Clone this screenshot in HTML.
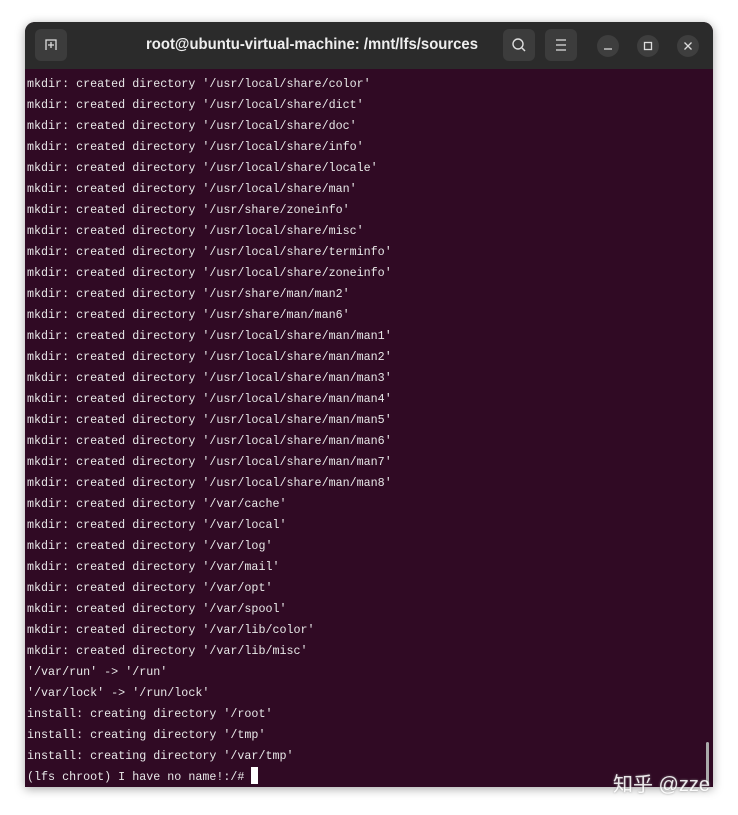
<!DOCTYPE html>
<html><head><meta charset="utf-8"><style>
body{margin:0;width:738px;height:815px;background:#fff;position:relative;overflow:hidden;font-family:"Liberation Sans",sans-serif}
.win{position:absolute;left:25px;top:22px;width:688px;height:765px;border-radius:10px 10px 0 0;overflow:hidden;box-shadow:0 2px 10px rgba(0,0,0,.35);background:#300a24}
.hdr{position:absolute;left:0;top:0;width:688px;height:47px;background:#2b2b2b}
.title{position:absolute;left:287px;top:14px;color:#eee;font-weight:bold;font-size:15.5px;white-space:nowrap;transform:translateX(-50%) scaleX(0.96)}
.btn{position:absolute;top:7px;width:32px;height:32px;border-radius:6px;background:#3c3c3c}
.circ{position:absolute;top:13px;width:22px;height:22px;border-radius:50%;background:#3e3e3e}
.term{position:absolute;left:2px;top:52px;font-family:"Liberation Mono",monospace;font-size:11.7px;color:#e8e8e8;white-space:pre;line-height:21px}
.cur{display:inline-block;width:7px;height:17px;background:#fff;vertical-align:-4px}
.sb{position:absolute;left:681px;top:720px;width:3px;height:42px;background:#aaa;border-radius:2px}
.wm{position:absolute;left:613px;top:768px;color:#fff;font-size:20px;font-family:"Liberation Sans","Noto Sans CJK SC",sans-serif;text-shadow:0 0 2px #888;opacity:.9}
</style></head><body>
<div class="win">
<div class="hdr">
<div class="btn" style="left:10px"><svg width="32" height="32"><path d="M11 21V11h10v10M16 13v6M13 16h6" stroke="#ddd" stroke-width="1.3" fill="none"/></svg></div>
<div class="title">root@ubuntu-virtual-machine: /mnt/lfs/sources</div>
<div class="btn" style="left:478px"><svg width="32" height="32"><circle cx="15" cy="15" r="5" stroke="#ddd" stroke-width="1.4" fill="none"/><path d="M19 19l3 3" stroke="#ddd" stroke-width="1.5"/></svg></div>
<div class="btn" style="left:520px"><svg width="32" height="32"><path d="M11 11h10M11 16h10M11 21h10" stroke="#ddd" stroke-width="1.3"/></svg></div>
<div class="circ" style="left:572px"><svg width="22" height="22"><path d="M7 14h8" stroke="#ddd" stroke-width="1.3"/></svg></div>
<div class="circ" style="left:612px"><svg width="22" height="22"><rect x="7.5" y="7.5" width="7" height="7" stroke="#ddd" stroke-width="1.3" fill="none"/></svg></div>
<div class="circ" style="left:652px"><svg width="22" height="22"><path d="M7.5 7.5l7 7M14.5 7.5l-7 7" stroke="#ddd" stroke-width="1.3"/></svg></div>
</div>
<div class="term">mkdir: created directory '/usr/local/share/color'
mkdir: created directory '/usr/local/share/dict'
mkdir: created directory '/usr/local/share/doc'
mkdir: created directory '/usr/local/share/info'
mkdir: created directory '/usr/local/share/locale'
mkdir: created directory '/usr/local/share/man'
mkdir: created directory '/usr/share/zoneinfo'
mkdir: created directory '/usr/local/share/misc'
mkdir: created directory '/usr/local/share/terminfo'
mkdir: created directory '/usr/local/share/zoneinfo'
mkdir: created directory '/usr/share/man/man2'
mkdir: created directory '/usr/share/man/man6'
mkdir: created directory '/usr/local/share/man/man1'
mkdir: created directory '/usr/local/share/man/man2'
mkdir: created directory '/usr/local/share/man/man3'
mkdir: created directory '/usr/local/share/man/man4'
mkdir: created directory '/usr/local/share/man/man5'
mkdir: created directory '/usr/local/share/man/man6'
mkdir: created directory '/usr/local/share/man/man7'
mkdir: created directory '/usr/local/share/man/man8'
mkdir: created directory '/var/cache'
mkdir: created directory '/var/local'
mkdir: created directory '/var/log'
mkdir: created directory '/var/mail'
mkdir: created directory '/var/opt'
mkdir: created directory '/var/spool'
mkdir: created directory '/var/lib/color'
mkdir: created directory '/var/lib/misc'
'/var/run' -> '/run'
'/var/lock' -> '/run/lock'
install: creating directory '/root'
install: creating directory '/tmp'
install: creating directory '/var/tmp'
(lfs chroot) I have no name!:/# <span class="cur"></span></div>
<div class="sb"></div>
</div>
<div class="wm">知乎 @zze</div>
</body></html>
